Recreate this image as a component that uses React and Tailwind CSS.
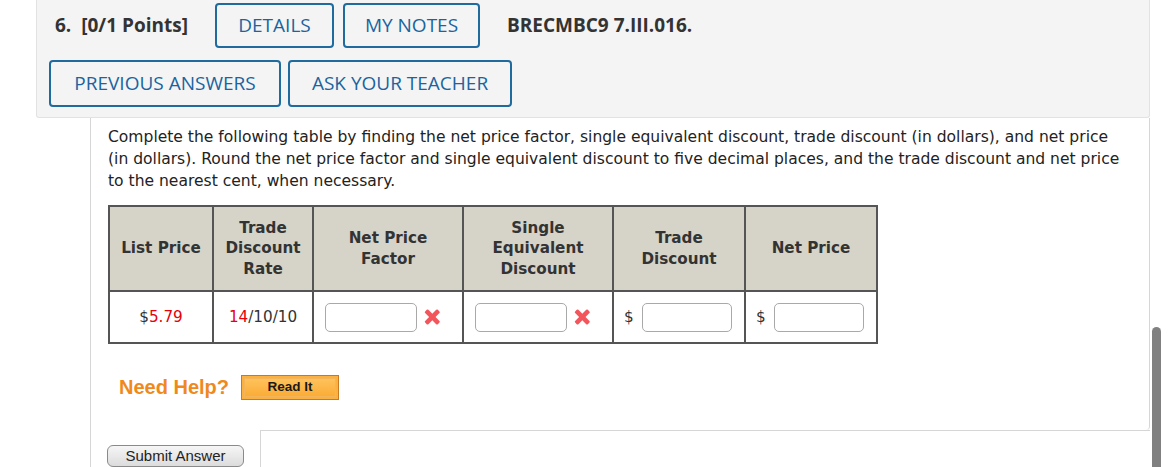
import React from "react";

const btn =
  "border-2 border-[#1f6b9e] rounded-[4px] text-[#1a64a0] text-[19px] font-medium bg-[#f4f4f4] flex items-center justify-center";

const RedX = () => (
  <svg width="18" height="18" viewBox="0 0 18 18" className="shrink-0">
    <g fill="#f2565c">
      <rect x="7" y="0" width="4.6" height="18" rx="1.2" transform="rotate(45 9.3 9)" />
      <rect x="7" y="0" width="4.6" height="18" rx="1.2" transform="rotate(-45 9.3 9)" />
    </g>
  </svg>
);

const Box = ({ w = "w-[92px]" }) => (
  <div className={`${w} h-[29px] border border-[#a9a9a9] rounded-[5px] bg-white`} />
);

const App = () => {
  return (
    <div className="relative w-[1170px] h-[467px] bg-white overflow-hidden font-['Open_Sans',sans-serif]">
      {/* Question header */}
      <div className="ml-[36px] w-[1114px] h-[118px] bg-[#f4f4f4] border border-t-0 border-[#e2e2e2] rounded-b-[3px] pl-[12px] pt-[3px]">
        <div className="flex items-center h-[45px]">
          <span className="ml-[6px] w-[160px] text-[19px] font-bold text-[#333] whitespace-nowrap">
            6.&nbsp; [0/1 Points]
          </span>
          <div className={`${btn} w-[119px] h-[45px]`}>DETAILS</div>
          <div className={`${btn} w-[137px] h-[45px] ml-[9px]`}>MY NOTES</div>
          <span className="ml-[27px] text-[19px] font-bold text-[#333]">BRECMBC9 7.III.016.</span>
        </div>
        <div className="flex mt-[12px]">
          <div className={`${btn} w-[232px] h-[47px]`}>PREVIOUS ANSWERS</div>
          <div className={`${btn} w-[224px] h-[47px] ml-[7px]`}>ASK YOUR TEACHER</div>
        </div>
      </div>

      {/* Question body */}
      <div className="ml-[90px] w-[1060px] h-[312px] border-l border-r border-[#d6d6d6] rounded-br-[4px] pl-[17px] pt-[8px] font-['DejaVu_Sans',Verdana,sans-serif] text-[#222]">
        <p className="text-[15.55px] leading-[22px] whitespace-nowrap">
          Complete the following table by finding the net price factor, single equivalent discount, trade discount (in dollars), and net price
          <br />
          (in dollars). Round the net price factor and single equivalent discount to five decimal places, and the trade discount and net price
          <br />
          to the nearest cent, when necessary.
        </p>

        <table className="mt-[13px] border-collapse border-2 border-[#555] text-[15.2px] text-[#333]">
          <thead>
            <tr className="h-[85px] bg-[#d6d3c9] font-bold leading-[20.5px]">
              <th className="w-[104px] border-2 border-[#555]">List Price</th>
              <th className="w-[100px] border-2 border-[#555]">Trade<br />Discount<br />Rate</th>
              <th className="w-[150px] border-2 border-[#555]">Net Price<br />Factor</th>
              <th className="w-[150px] border-2 border-[#555]">Single<br />Equivalent<br />Discount</th>
              <th className="w-[132px] border-2 border-[#555]">Trade<br />Discount</th>
              <th className="w-[132px] border-2 border-[#555]">Net Price</th>
            </tr>
          </thead>
          <tbody>
            <tr className="h-[52px] bg-white">
              <td className="border-2 border-[#555] text-center">
                $<span className="text-[#e8000b]">5.79</span>
              </td>
              <td className="border-2 border-[#555] text-center">
                <span className="text-[#e8000b]">14</span>/10/10
              </td>
              <td className="border-2 border-[#555]">
                <div className="flex items-center gap-[6px] pl-[11px]">
                  <Box />
                  <RedX />
                </div>
              </td>
              <td className="border-2 border-[#555]">
                <div className="flex items-center gap-[6px] pl-[11px]">
                  <Box />
                  <RedX />
                </div>
              </td>
              <td className="border-2 border-[#555]">
                <div className="flex items-center gap-[8px] pl-[10px]">
                  <span>$</span>
                  <Box w="w-[90px]" />
                </div>
              </td>
              <td className="border-2 border-[#555]">
                <div className="flex items-center gap-[8px] pl-[10px]">
                  <span>$</span>
                  <Box w="w-[90px]" />
                </div>
              </td>
            </tr>
          </tbody>
        </table>

        <div className="flex items-center mt-[28px] ml-[11px] font-['Liberation_Sans',Arial,sans-serif]">
          <span className="text-[20px] font-bold text-[#f0891d]">Need Help?</span>
          <div className="ml-[12px] w-[98px] h-[25px] bg-[#fbb040] border border-[#c77a22] flex items-center justify-center">
            <div className="w-[92px] h-[19px] border border-[#f4b45a] bg-gradient-to-b from-[#fec25a] to-[#fbac36] flex items-center justify-center text-[13.5px] font-bold text-[#1a1a1a]">
              Read It
            </div>
          </div>
        </div>
      </div>

      {/* Submit row */}
      <div className="flex">
        <div className="ml-[90px] w-[170px] border-l border-[#d6d6d6] pt-[15px] pl-[16px]">
          <div className="w-[137px] h-[22px] rounded-[6px] border border-[#8a8a8a] bg-gradient-to-b from-[#f6f6f6] to-[#dcdcdc] flex items-center justify-center text-[15px] text-[#222] font-['Liberation_Sans',Arial,sans-serif]">
            Submit Answer
          </div>
        </div>
        <div className="w-[890px] h-[40px] border-l border-t border-[#d6d6d6]" />
      </div>

      {/* scrollbar thumb */}
      <div className="absolute left-[1152px] top-[327px] w-[9px] h-[150px] bg-[#808080] rounded-t-full" />
    </div>
  );
};

export default App;
